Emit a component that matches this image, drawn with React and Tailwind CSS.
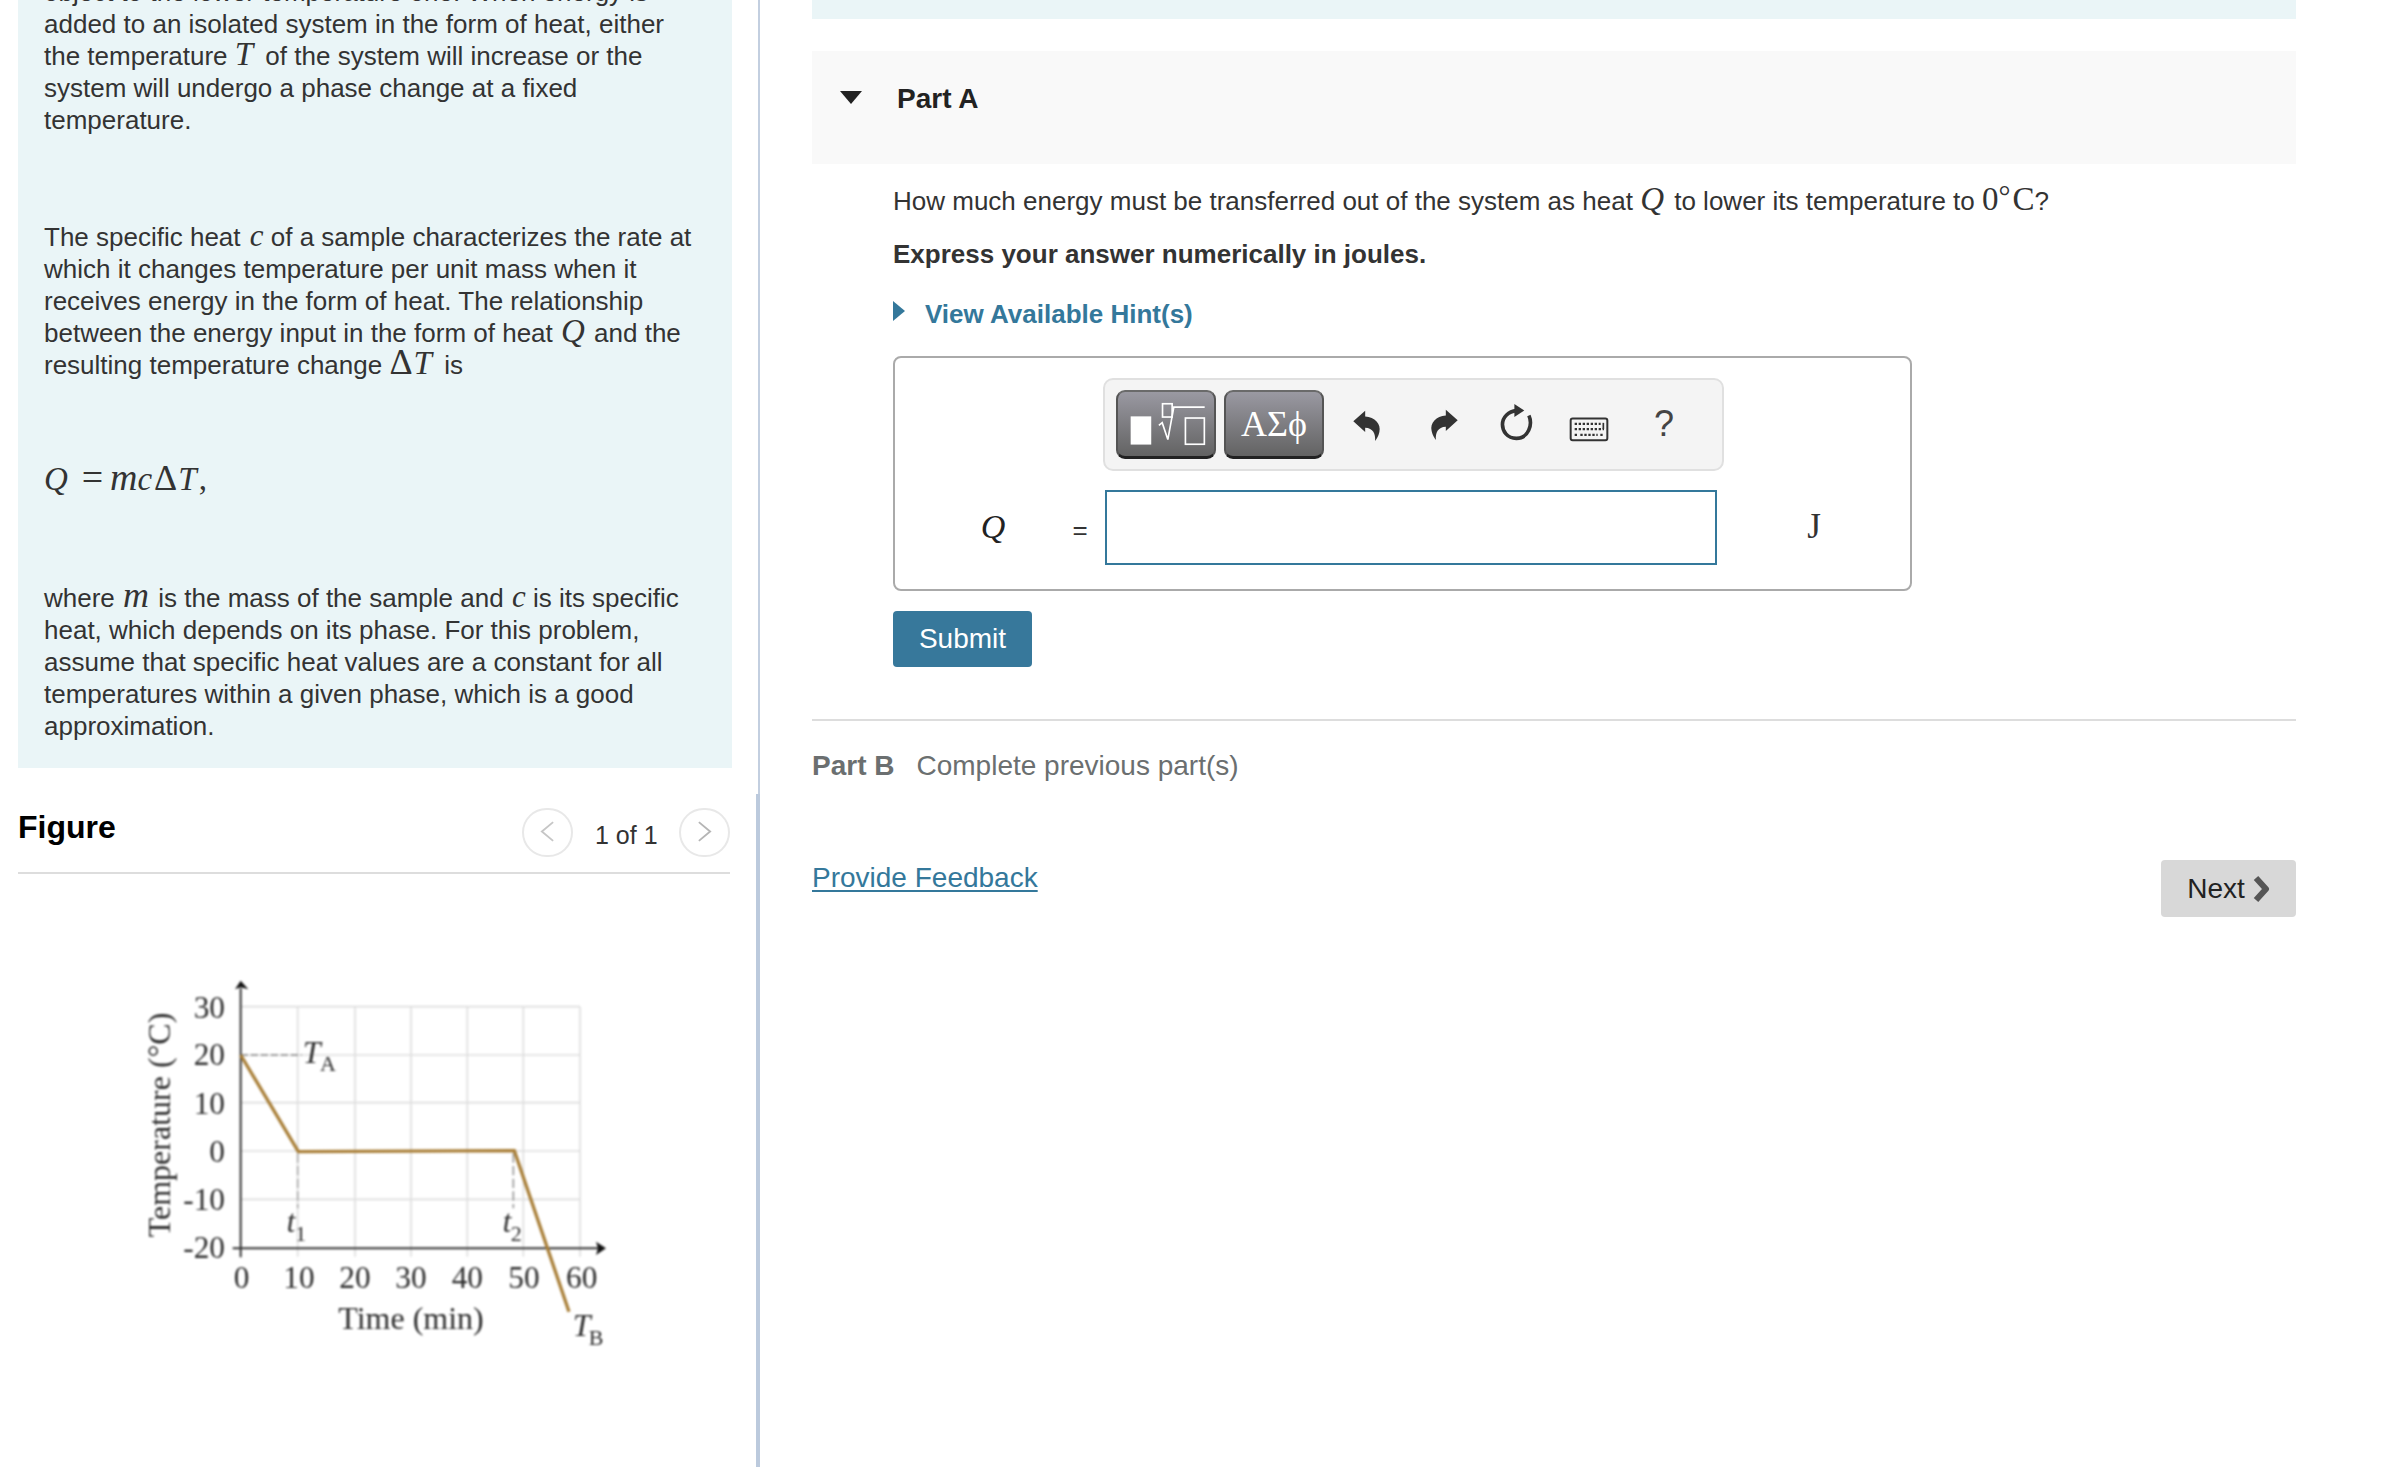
import React from "react";

const M = ({ children, className = "" }) => (
  <span className={`font-['Liberation_Serif',serif] italic text-[31px] leading-[0] ${className}`}>{children}</span>
);
const R = ({ children, className = "" }) => (
  <span className={`font-['Liberation_Serif',serif] text-[31px] leading-[0] ${className}`}>{children}</span>
);

function Chart() {
  const vx = [533, 705, 873, 1042, 1210, 1380];
  const hy = [140, 285, 428, 573, 718];
  const xl = [["0", 365], ["10", 537], ["20", 705], ["30", 873], ["40", 1042], ["50", 1212], ["60", 1385]];
  const yl = [["30", 315, 173], ["20", 315, 316], ["10", 315, 461], ["0", 315, 605], ["-10", 315, 749], ["-20", 315, 894]];
  return (
    <svg viewBox="0 0 1560 1260" className="block w-[520px] h-[420px] blur-[0.8px]" fontFamily="'Liberation Serif',serif" fill="#2c2c2c">
      {vx.map((x) => <line key={x} x1={x} x2={x} y1="140" y2="890" stroke="#dedede" strokeWidth="5" />)}
      {hy.map((y) => <line key={y} x1="362" x2="1380" y1={y} y2={y} stroke="#dedede" strokeWidth="5" />)}
      <line x1="362" x2="545" y1="285" y2="285" stroke="#888" strokeWidth="5" strokeDasharray="22 8" />
      <line x1="533" x2="533" y1="580" y2="745" stroke="#aaa" strokeWidth="5" strokeDasharray="28 10" />
      <line x1="1180" x2="1180" y1="580" y2="745" stroke="#999" strokeWidth="5" strokeDasharray="28 10" />
      <line x1="362" x2="362" y1="85" y2="892" stroke="#333" strokeWidth="6" />
      <line x1="338" x2="1435" y1="865" y2="865" stroke="#333" strokeWidth="6" />
      <path d="M362 62L385 88L362 82L345 88Z" fill="#111" />
      <path d="M1458 865L1428 845L1434 865L1428 885Z" fill="#111" />
      <path d="M362 285L535 575L1183 572L1347 1055" fill="none" stroke="#a97f38" strokeWidth="10" />
      {xl.map(([t, x]) => <text key={t} x={x} y="985" textAnchor="middle" fontSize="94">{t}</text>)}
      {yl.map(([t, x, y]) => <text key={t} x={x} y={y} textAnchor="end" fontSize="94">{t}</text>)}
      <text x="873" y="1107" textAnchor="middle" fontSize="96">Time (min)</text>
      <text transform="translate(150 832) rotate(-90)" fontSize="96">Temperature (°C)</text>
      <text x="548" y="309" fontSize="96" fontStyle="italic">T</text>
      <text x="600" y="333" fontSize="66">A</text>
      <text x="1358" y="1129" fontSize="96" fontStyle="italic">T</text>
      <text x="1406" y="1154" fontSize="66">B</text>
      <text x="500" y="817" fontSize="92" fontStyle="italic">t</text>
      <text x="526" y="843" fontSize="66">1</text>
      <text x="1148" y="817" fontSize="92" fontStyle="italic">t</text>
      <text x="1172" y="843" fontSize="66">2</text>
    </svg>
  );
}

function Pager() {
  return (
    <div className="flex items-start mt-[1px]">
      <div className="w-[51px] h-[49px] rounded-full border-2 border-[#e8e8e8] flex items-center justify-center">
        <svg viewBox="0 0 16 22" className="w-[15px] h-[21px] -mt-[3px]"><path d="M14 1L2 11L14 21" fill="none" stroke="#c6c6c6" strokeWidth="2" /></svg>
      </div>
      <span className="ml-[22px] mr-[21px] w-[63px] mt-[11px] text-[25px] leading-[32px] text-[#333] whitespace-nowrap">1 of 1</span>
      <div className="w-[51px] h-[49px] rounded-full border-2 border-[#e8e8e8] flex items-center justify-center">
        <svg viewBox="0 0 16 22" className="w-[15px] h-[21px] -mt-[3px]"><path d="M2 1L14 11L2 21" fill="none" stroke="#b5b5b5" strokeWidth="2" /></svg>
      </div>
    </div>
  );
}

function Left() {
  return (
    <div className="w-[756px] shrink-0">
      <div className="ml-[18px] w-[714px] -mt-[24px] bg-[#eaf5f7] pl-[26px] pr-[20px] pb-[26px] text-[26px] leading-[32px] text-[#333]">
        <p className="whitespace-nowrap">object to the lower temperature one. When energy is</p>
        <p className="whitespace-nowrap">added to an isolated system in the form of heat, either</p>
        <p className="whitespace-nowrap">the temperature <M className="text-[33px] mr-[5px]">T</M> of the system will increase or the</p>
        <p className="whitespace-nowrap">system will undergo a phase change at a fixed</p>
        <p className="whitespace-nowrap">temperature.</p>
        <div className="h-[85px]" />
        <p className="whitespace-nowrap">The specific heat <M className="ml-[2px]">c</M> of a sample characterizes the rate at</p>
        <p className="whitespace-nowrap">which it changes temperature per unit mass when it</p>
        <p className="whitespace-nowrap">receives energy in the form of heat. The relationship</p>
        <p className="whitespace-nowrap">between the energy input in the form of heat <M className="text-[33px] ml-[1px] mr-[2px]">Q</M> and the</p>
        <p className="whitespace-nowrap">resulting temperature change <R className="text-[36px]">Δ</R><M className="text-[33px] ml-[1px] mr-[5px]">T</M> is</p>
        <div className="h-[84px]" />
        <p className="whitespace-nowrap h-[32px]">
          <M className="text-[33px] inline-block w-[31px]">Q</M>
          <R className="text-[38px] inline-block w-[35px] text-center">=</R>
          <M className="text-[38px]">m</M>
          <M className="text-[33px] mr-[2px]">c</M>
          <R className="text-[36px]">Δ</R>
          <M className="text-[33px] ml-[1px] mr-[2px]">T</M>
          <R className="text-[33px]">,</R>
        </p>
        <div className="h-[85px]" />
        <p className="whitespace-nowrap">where <M className="text-[36px] ml-[1px] mr-[2px]">m</M> is the mass of the sample and <M className="ml-[1px]">c</M> is its specific</p>
        <p className="whitespace-nowrap">heat, which depends on its phase. For this problem,</p>
        <p className="whitespace-nowrap">assume that specific heat values are a constant for all</p>
        <p className="whitespace-nowrap">temperatures within a given phase, which is a good</p>
        <p className="whitespace-nowrap">approximation.</p>
      </div>
      <div className="ml-[18px] w-[712px] mt-[39px] h-[67px] border-b-2 border-[#dddddd] flex items-start justify-between">
        <h2 className="text-[32px] leading-[40px] font-bold text-black">Figure</h2>
        <Pager />
      </div>
      <div className="ml-[120px] mt-[86px]">
        <Chart />
      </div>
    </div>
  );
}

function Toolbar() {
  return (
    <div className="ml-[208px] mt-[20px] w-[621px] h-[93px] bg-[#f4f4f4] border-2 border-[#e0e0e0] rounded-[10px] flex items-start pt-[10px] pl-[11px]">
      <div className="w-[100px] h-[69px] rounded-[9px] border-2 border-t-[#6a6a6a] border-x-[#555] border-b-[3px] border-b-[#222] bg-gradient-to-b from-[#9a99a2] to-[#636363] flex items-center justify-start pl-[11px]">
        <svg viewBox="60 50 232 132" className="w-[77px] h-[44px]">
          <rect x="65" y="93" width="62" height="85" fill="#fff" />
          <rect x="161" y="55" width="29" height="40" fill="none" stroke="#fff" strokeWidth="5" />
          <path d="M150 120L160 112L177 163L195 65H288" fill="none" stroke="#fff" strokeWidth="5" />
          <rect x="230" y="98" width="57" height="79" fill="none" stroke="#fff" strokeWidth="5" />
        </svg>
      </div>
      <div className="ml-[8px] w-[100px] h-[69px] rounded-[9px] border-2 border-t-[#6a6a6a] border-x-[#555] border-b-[3px] border-b-[#222] bg-gradient-to-b from-[#9a99a2] to-[#636363] flex items-center justify-center font-['Liberation_Serif',serif] text-[36px] leading-none text-white">
        ΑΣϕ
      </div>
      <svg viewBox="30 30 100 110" className="ml-[26px] mt-[17px] w-[33px] h-[37px]">
        <path d="M40 72L76 40V58C105 60 125 80 119 105C116 118 111 126 106 132C108 112 100 92 76 92V105Z" fill="#333" />
      </svg>
      <svg viewBox="30 30 100 110" className="ml-[45px] mt-[16px] w-[33px] h-[37px] -scale-x-100">
        <path d="M40 72L76 40V58C105 60 125 80 119 105C116 118 111 126 106 132C108 112 100 92 76 92V105Z" fill="#333" />
      </svg>
      <svg viewBox="470 30 120 115" className="ml-[36px] mt-[13px] w-[40px] h-[38px]">
        <path d="M566 68C578 95 565 137 528 137C500 137 486 115 486 95C486 72 505 55 528 53" fill="none" stroke="#333" strokeWidth="11" />
        <path d="M522 33L552 53L522 72Z" fill="#333" />
      </svg>
      <svg viewBox="690 65 120 74" className="ml-[32px] mt-[27px] w-[40px] h-[25px]">
        <rect x="695" y="69" width="110" height="65" rx="6" fill="none" stroke="#333" strokeWidth="6" />
        <path d="M707 85H785M707 101H795M707 118H716M724 118H776M784 118H794" fill="none" stroke="#333" strokeWidth="7" strokeDasharray="7 5" />
        <path d="M793 82V101" fill="none" stroke="#333" strokeWidth="5" />
      </svg>
      <span className="ml-[45px] mt-[14px] text-[36px] leading-[40px] text-[#444] font-['Liberation_Sans',sans-serif]">?</span>
    </div>
  );
}

function Right() {
  return (
    <div className="ml-[52px] w-[1484px] shrink-0">
      <div className="h-[19px] bg-[#eaf5f7]" />
      <div className="mt-[32px] h-[113px] bg-[#f9f9f9] flex items-start">
        <svg viewBox="0 0 22 13" className="ml-[28px] mt-[40px] w-[22px] h-[13px]"><path d="M0 0H22L11 13Z" fill="#222" /></svg>
        <h3 className="ml-[35px] mt-[32px] text-[28px] leading-[32px] font-bold text-[#222]">Part A</h3>
      </div>
      <div className="pl-[81px]">
        <p className="mt-[21px] text-[26px] leading-[32px] text-[#333] whitespace-nowrap">
          How much energy must be transferred out of the system as heat <M className="text-[33px] mr-[3px]">Q</M> to lower its temperature to <R className="text-[33px]">0</R><span className="relative -top-[4px] font-['Liberation_Serif',serif] text-[30px] leading-[0]">°</span><R className="text-[33px] ml-[2px]">C</R>?
        </p>
        <p className="mt-[21px] text-[26px] leading-[32px] font-bold text-[#333] whitespace-nowrap">Express your answer numerically in joules.</p>
        <div className="mt-[28px] flex items-start">
          <svg viewBox="0 0 12 20" className="mt-[3px] w-[12px] h-[20px]"><path d="M0 0L12 10L0 20Z" fill="#34789b" /></svg>
          <span className="ml-[20px] text-[26px] leading-[32px] font-bold text-[#34789b] whitespace-nowrap">View Available Hint(s)</span>
        </div>
        <div className="mt-[26px] w-[1019px] h-[235px] border-2 border-[#aaaaaa] rounded-[8px]">
          <Toolbar />
          <div className="mt-[19px] flex items-center h-[75px]">
            <span className="ml-[78px] w-[40px] text-center font-['Liberation_Serif',serif] italic text-[34px] leading-[40px] text-[#222] -mt-[2px]">Q</span>
            <span className="ml-[57px] w-[20px] text-center text-[26px] leading-[32px] text-[#333] mt-[4px]">=</span>
            <div className="ml-[15px] w-[612px] h-[75px] border-2 border-[#34789b] bg-white" />
            <span className="ml-[85px] w-[24px] text-center font-['Liberation_Serif',serif] text-[35px] leading-[36px] text-[#333] -mt-[2px]">J</span>
          </div>
        </div>
        <button className="mt-[20px] w-[139px] h-[56px] block bg-[#37789b] rounded-[4px] text-white text-[28px] leading-[32px]">Submit</button>
      </div>
      <div className="mt-[52px] border-t-2 border-[#dddddd] pt-[29px] flex items-start text-[#6b6f70]">
        <span className="text-[28px] leading-[32px] font-bold">Part B</span>
        <span className="ml-[22px] text-[28px] leading-[32px] whitespace-nowrap">Complete previous part(s)</span>
      </div>
      <div className="mt-[78px] flex items-start justify-between">
        <a className="mt-[2px] text-[28px] leading-[32px] text-[#34789b] underline underline-offset-[3px] decoration-2">Provide Feedback</a>
        <button className="w-[135px] h-[57px] bg-[#d8d8d8] rounded-[4px] flex items-center justify-center gap-[7px] text-[28px] leading-[32px] text-[#222]">
          Next
          <svg viewBox="0 0 18 28" className="w-[18px] h-[28px]"><path d="M4 3L14 14L4 25" fill="none" stroke="#555" strokeWidth="6" strokeLinejoin="round" /></svg>
        </button>
      </div>
    </div>
  );
}

export default function App() {
  return (
    <div className="w-[2388px] h-[1467px] overflow-hidden bg-white flex items-stretch font-['Liberation_Sans',Arial,sans-serif]">
      <Left />
      <div className="w-[4px] shrink-0 flex flex-col">
        <div className="h-[794px] ml-[2px] w-[2px] bg-[#c3cfe0]" />
        <div className="flex-1 bg-[#bccadd]" />
      </div>
      <Right />
    </div>
  );
}
